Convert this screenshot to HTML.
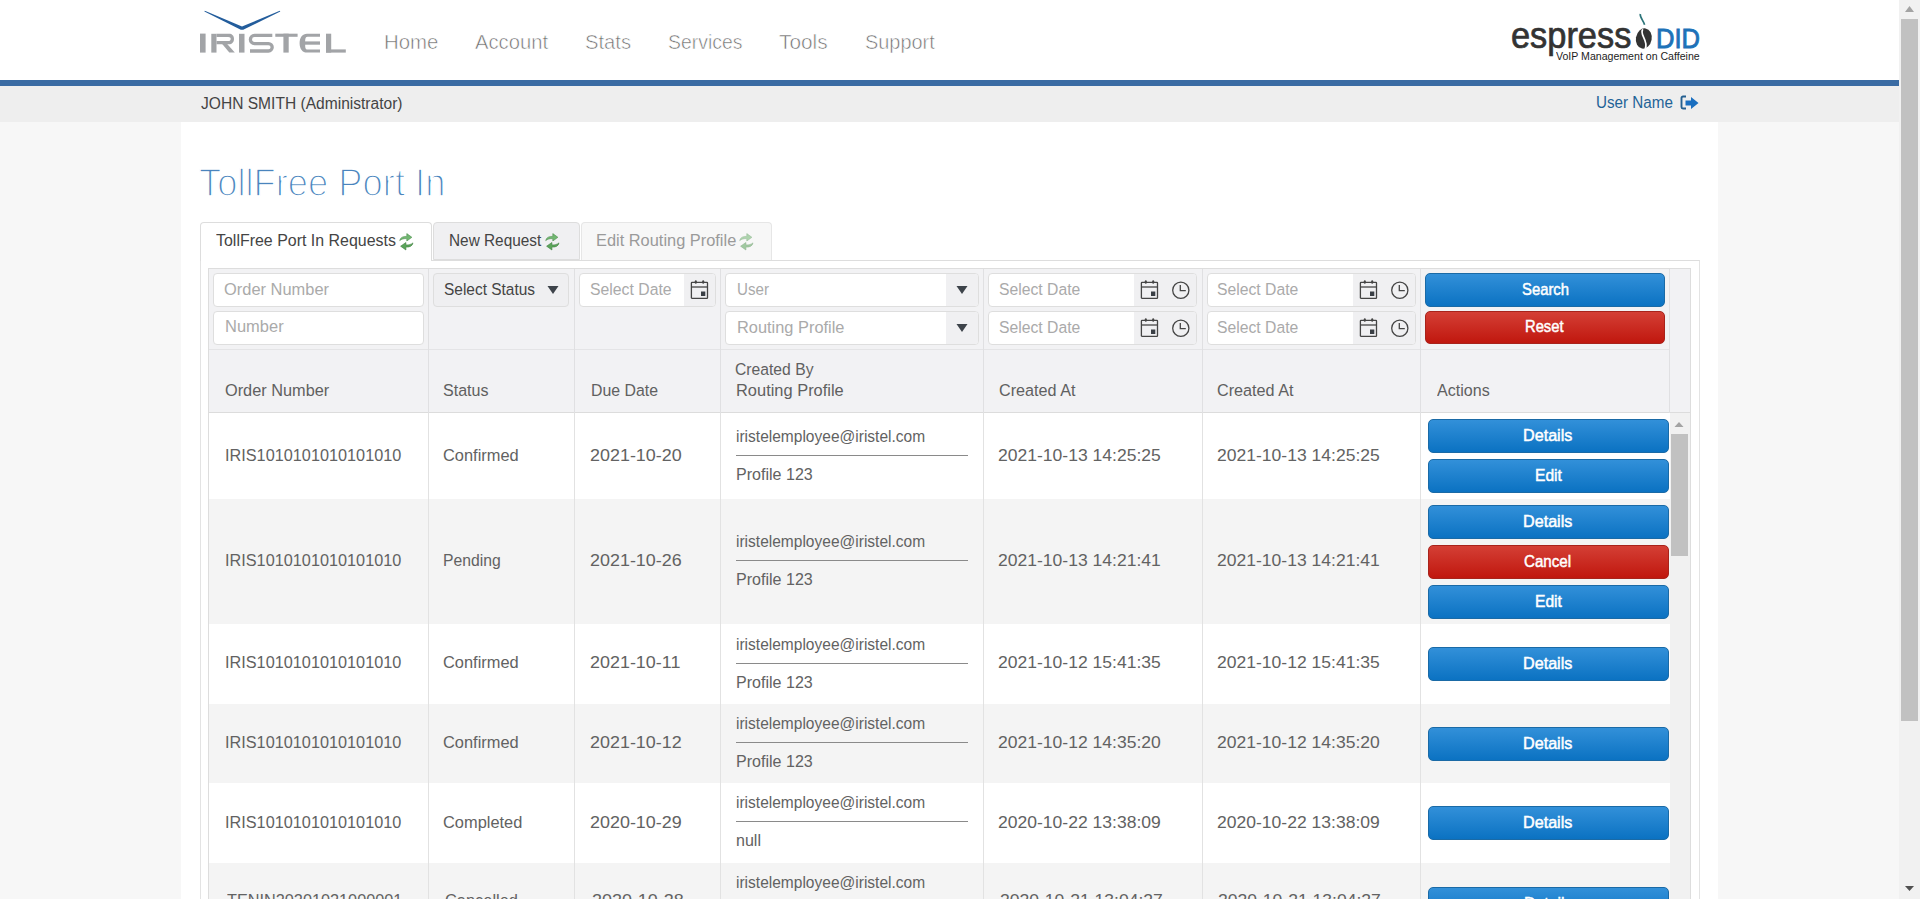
<!DOCTYPE html>
<html><head><meta charset="utf-8"><title>TollFree Port In</title>
<style>
html,body{margin:0;padding:0;}
body{width:1920px;height:899px;overflow:hidden;position:relative;background:#f7f7f7;font-family:"Liberation Sans",sans-serif;}
div,svg{position:absolute;}
.t{position:absolute;white-space:nowrap;transform-origin:0 0;display:block;}
</style></head><body>
<div style="left:0px;top:0px;width:1899px;height:80px;background:#fff"></div>
<div style="left:0px;top:80px;width:1899px;height:6px;background:#3a6ba3"></div>
<div style="left:0px;top:86px;width:1899px;height:36px;background:#eeeeee"></div>
<div style="left:0px;top:122px;width:1899px;height:777px;background:#f7f7f7"></div>
<div style="left:181px;top:122px;width:1537px;height:777px;background:#fff"></div>
<svg style="position:absolute;left:195px;top:5px" width="160" height="55" viewBox="195 5 160 55">
<path d="M204.8,10.7 L242,26.5 L279.8,10.7 L280.3,11.6 L243.2,29.8 L240.8,29.8 L204.4,11.6 Z" fill="#235d9c"/>
<g fill="#a2a4a7">
<rect x="200" y="33.6" width="5.6" height="19"/>
<rect x="211.3" y="33.8" width="5.2" height="18.8"/>
<path d="M211.3,33.8 H229 C232,33.8 234,35.8 234,38.9 C234,42 232,44.2 229,44.2 H216.5 V41 H228.3 C229.8,41 230.7,40.1 230.7,38.9 C230.7,37.7 229.8,37 228.3,37 H216.5 V33.8 Z"/>
<path d="M222.2,44 H227.2 L234.8,52.6 H229.3 Z"/>
<rect x="239" y="33.8" width="5.5" height="18.8"/>
<path d="M272.3,35.4 H254.5 A4.1,4.1 0 0 0 254.5,43.6 H268.5 A3.7,3.7 0 0 1 268.5,51 H250" fill="none" stroke="#a2a4a7" stroke-width="3.3"/>
<rect x="275.3" y="33.7" width="22.3" height="3.1"/>
<rect x="283.4" y="33.7" width="5.3" height="18.9"/>
<path d="M320,33.7 H307 C302.5,33.7 299.6,37.5 299.6,43.2 C299.6,48.8 302.5,52.6 307,52.6 H320 V49.5 H307.5 C305,49.5 305.2,46.5 305.2,43.2 C305.2,39.8 305,36.8 307.5,36.8 H320 Z"/>
<rect x="305" y="41.4" width="15" height="3.3"/>
<rect x="326" y="33.7" width="5.2" height="18.9"/>
<rect x="326" y="49.4" width="19.8" height="3.2"/>
</g></svg>
<span class="t" style="left:383.60px;top:31.00px;font-size:21px;line-height:21px;color:#707070;transform:scaleX(0.9712);-webkit-text-stroke:0.6px #fff;">Home</span>
<span class="t" style="left:474.64px;top:31.00px;font-size:21px;line-height:21px;color:#707070;transform:scaleX(0.9619);-webkit-text-stroke:0.6px #fff;">Account</span>
<span class="t" style="left:584.73px;top:31.00px;font-size:21px;line-height:21px;color:#707070;transform:scaleX(0.9635);-webkit-text-stroke:0.6px #fff;">Stats</span>
<span class="t" style="left:667.69px;top:31.00px;font-size:21px;line-height:21px;color:#707070;transform:scaleX(0.9236);-webkit-text-stroke:0.6px #fff;">Services</span>
<span class="t" style="left:778.84px;top:31.00px;font-size:21px;line-height:21px;color:#707070;transform:scaleX(0.9899);-webkit-text-stroke:0.6px #fff;">Tools</span>
<span class="t" style="left:864.64px;top:31.00px;font-size:21px;line-height:21px;color:#707070;transform:scaleX(0.9480);-webkit-text-stroke:0.6px #fff;">Support</span>
<span class="t" style="left:1511.00px;top:18.00px;font-size:36px;line-height:36px;color:#333;transform:scaleX(0.9548);-webkit-text-stroke:0.7px #333;">espress</span>
<svg style="position:absolute;left:1630px;top:8px" width="30" height="44" viewBox="1630 8 30 44">
<path d="M1640.3,14 C1639.6,17.5 1643.5,20.5 1644.6,24.8" stroke="#2a7378" stroke-width="1.7" fill="none"/>
<ellipse cx="1643.8" cy="38.5" rx="7.9" ry="10.2" fill="#333" transform="rotate(10 1643.8 38.5)"/>
<path d="M1642.8,29.2 C1638.8,34.5 1648.8,40 1645.3,48.8" stroke="#fff" stroke-width="1.7" fill="none"/>
</svg>
<span class="t" style="left:1656.00px;top:25.00px;font-size:28px;line-height:28px;color:#1d72b8;transform:scaleX(0.9119);-webkit-text-stroke:0.9px #1d72b8;">DID</span>
<span class="t" style="left:1556.00px;top:52.00px;font-size:10px;line-height:10px;color:#1c1c1c;transform:scaleX(1.0576);">VoIP Management on Caffeine</span>
<span class="t" style="left:201.45px;top:96.00px;font-size:16px;line-height:16px;color:#444;transform:scaleX(0.9731);">JOHN SMITH (Administrator)</span>
<span class="t" style="left:1595.79px;top:95.00px;font-size:16px;line-height:16px;color:#1f6397;transform:scaleX(0.9500);">User Name</span>
<svg style="position:absolute;left:1680px;top:95px" width="20" height="16" viewBox="0 0 20 16">
<path d="M6,1.5 H3 a1.5,1.5 0 0 0 -1.5,1.5 V12 a1.5,1.5 0 0 0 1.5,1.5 H6" stroke="#245f90" stroke-width="1.9" fill="none"/>
<path d="M5.5,5.5 H11 V2 L18.5,8 L11,14 V10.5 H5.5 Z" fill="#1a6fc0"/>
</svg>
<div style="left:1899px;top:0px;width:21px;height:899px;background:#f1f1f1"></div>
<div style="left:1901px;top:19px;width:17px;height:702px;background:#c1c1c1"></div>
<svg style="position:absolute;left:1899px;top:0" width="21" height="17"><path d="M6,12 L10.5,6 L15,12 Z" fill="#a3a3a3"/></svg>
<svg style="position:absolute;left:1899px;top:882px" width="21" height="17"><path d="M6,4 L15,4 L10.5,9 Z" fill="#505050"/></svg>
<span class="t" style="left:198.89px;top:163.00px;font-size:39px;line-height:39px;color:#4a84bd;transform:scaleX(0.9318);-webkit-text-stroke:1.6px #fff;">TollFree Port In</span>
<div style="left:200px;top:260px;width:1500px;height:639px;border-left:1px solid #e3e3e3;border-right:1px solid #e3e3e3;border-top:1px solid #ddd;box-sizing:border-box;background:#fff"></div>
<div style="left:200px;top:222px;width:232px;height:39px;background:#fff;border:1px solid #ddd;border-bottom:none;border-radius:4px 4px 0 0;box-sizing:border-box"></div>
<div style="left:433px;top:222px;width:147px;height:38px;background:#f0f0f2;border:1px solid #ddd;border-radius:4px 4px 0 0;box-sizing:border-box"></div>
<div style="left:581px;top:222px;width:191px;height:38px;background:#f7f7f7;border:1px solid #e6e6e6;border-bottom:none;border-radius:4px 4px 0 0;box-sizing:border-box"></div>
<span class="t" style="left:216.00px;top:231.70px;font-size:15px;line-height:15px;color:#444;transform:scale(1.0635,1.100);">TollFree Port In Requests</span>
<span class="t" style="left:449.25px;top:231.70px;font-size:15px;line-height:15px;color:#444;transform:scale(1.0244,1.100);">New Request</span>
<span class="t" style="left:595.99px;top:231.70px;font-size:15px;line-height:15px;color:#9a9a9a;transform:scale(1.0923,1.100);">Edit Routing Profile</span>
<svg style="position:absolute;left:397px;top:233px;opacity:1.0" width="17" height="18" viewBox="0 0 17 18">
<path d="M2.7,7.6 C3.3,4.3 6.3,3.2 9.8,3.4 V0.6 L14.9,4.3 L9.8,8 V5.6 C6.9,5.4 4.6,6.1 2.7,7.6 Z" fill="#72b872" stroke="#4e8f4e" stroke-width="0.6"/>
<path d="M16,9.9 C15.4,13.2 12.4,14.3 8.9,14.1 V17 L3.6,13.2 L8.9,9.5 V11.9 C11.8,12.1 14.1,11.4 16,9.9 Z" fill="#5aa55a" stroke="#3f7f3f" stroke-width="0.6"/>
</svg>
<svg style="position:absolute;left:543px;top:233px;opacity:1.0" width="17" height="18" viewBox="0 0 17 18">
<path d="M2.7,7.6 C3.3,4.3 6.3,3.2 9.8,3.4 V0.6 L14.9,4.3 L9.8,8 V5.6 C6.9,5.4 4.6,6.1 2.7,7.6 Z" fill="#72b872" stroke="#4e8f4e" stroke-width="0.6"/>
<path d="M16,9.9 C15.4,13.2 12.4,14.3 8.9,14.1 V17 L3.6,13.2 L8.9,9.5 V11.9 C11.8,12.1 14.1,11.4 16,9.9 Z" fill="#5aa55a" stroke="#3f7f3f" stroke-width="0.6"/>
</svg>
<svg style="position:absolute;left:736.5px;top:233px;opacity:0.55" width="17" height="18" viewBox="0 0 17 18">
<path d="M2.7,7.6 C3.3,4.3 6.3,3.2 9.8,3.4 V0.6 L14.9,4.3 L9.8,8 V5.6 C6.9,5.4 4.6,6.1 2.7,7.6 Z" fill="#72b872" stroke="#4e8f4e" stroke-width="0.6"/>
<path d="M16,9.9 C15.4,13.2 12.4,14.3 8.9,14.1 V17 L3.6,13.2 L8.9,9.5 V11.9 C11.8,12.1 14.1,11.4 16,9.9 Z" fill="#5aa55a" stroke="#3f7f3f" stroke-width="0.6"/>
</svg>
<div style="left:208px;top:268px;width:1483px;height:631px;background:#f2f2f4;border:1px solid #ddd;box-sizing:border-box;border-bottom:none"></div>
<div style="left:209px;top:349px;width:1460px;height:1px;background:#e4e4e6"></div>
<div style="left:209px;top:412px;width:1481px;height:1px;background:#dcdcdc"></div>
<div style="left:428px;top:269px;width:1px;height:144px;background:#e0e0e2"></div>
<div style="left:574px;top:269px;width:1px;height:144px;background:#e0e0e2"></div>
<div style="left:720px;top:269px;width:1px;height:144px;background:#e0e0e2"></div>
<div style="left:983px;top:269px;width:1px;height:144px;background:#e0e0e2"></div>
<div style="left:1202px;top:269px;width:1px;height:144px;background:#e0e0e2"></div>
<div style="left:1420px;top:269px;width:1px;height:144px;background:#e0e0e2"></div>
<div style="left:1669px;top:269px;width:1px;height:144px;background:#e0e0e2"></div>
<div style="left:209px;top:413px;width:1461px;height:86px;background:#fff"></div>
<div style="left:209px;top:499px;width:1461px;height:125px;background:#f4f4f4"></div>
<div style="left:209px;top:624px;width:1461px;height:80px;background:#fff"></div>
<div style="left:209px;top:704px;width:1461px;height:79px;background:#f4f4f4"></div>
<div style="left:209px;top:783px;width:1461px;height:80px;background:#fff"></div>
<div style="left:209px;top:863px;width:1461px;height:97px;background:#f4f4f4"></div>
<div style="left:428px;top:413px;width:1px;height:486px;background:#e2e2e2"></div>
<div style="left:574px;top:413px;width:1px;height:486px;background:#e2e2e2"></div>
<div style="left:720px;top:413px;width:1px;height:486px;background:#e2e2e2"></div>
<div style="left:983px;top:413px;width:1px;height:486px;background:#e2e2e2"></div>
<div style="left:1202px;top:413px;width:1px;height:486px;background:#e2e2e2"></div>
<div style="left:1420px;top:413px;width:1px;height:486px;background:#e2e2e2"></div>
<div style="left:1670px;top:413px;width:20px;height:486px;background:#f1f1f1"></div>
<div style="left:1671px;top:434px;width:17px;height:122px;background:#c1c1c1"></div>
<svg style="position:absolute;left:1670px;top:418px" width="18" height="12"><path d="M4.5,9 L9,4 L13.5,9 Z" fill="#a3a3a3"/></svg>
<div style="left:213px;top:273px;width:211px;height:34px;background:#fff;border:1px solid #dedede;border-radius:4px;box-sizing:border-box"></div>
<div style="left:213px;top:311px;width:211px;height:34px;background:#fff;border:1px solid #dedede;border-radius:4px;box-sizing:border-box"></div>
<div style="left:433px;top:273px;width:136px;height:34px;background:#efeff1;border:1px solid #dedede;border-radius:4px;box-sizing:border-box"></div>
<span class="t" style="left:443.84px;top:280.70px;font-size:15px;line-height:15px;color:#444;transform:scale(1.0299,1.100);">Select Status</span>
<svg style="position:absolute;left:547px;top:285px" width="12" height="10"><path d="M0.5,1 L11.5,1 L6,9 Z" fill="#3d434a"/></svg>
<span class="t" style="left:224.15px;top:280.70px;font-size:15px;line-height:15px;color:#aaa;transform:scale(1.0958,1.100);">Order Number</span>
<span class="t" style="left:224.64px;top:317.70px;font-size:15px;line-height:15px;color:#aaa;transform:scale(1.0987,1.100);">Number</span>
<div style="left:579px;top:273px;width:137px;height:34px;background:#fff;border:1px solid #dedede;border-radius:4px;box-sizing:border-box"></div>
<div style="left:684px;top:274px;width:31px;height:32px;background:#f0f0f2;border-radius:0 3px 3px 0"></div>
<svg style="position:absolute;left:690px;top:280px" width="19" height="20" viewBox="0 0 19 20">
<rect x="1.4" y="2.3" width="16.1" height="16" fill="none" stroke="#454545" stroke-width="1.3" rx="0.6"/>
<line x1="1.4" y1="7" x2="17.5" y2="7" stroke="#454545" stroke-width="1.3"/>
<rect x="4.8" y="0.2" width="2" height="3.6" fill="#454545" rx="1"/><rect x="12.2" y="0.2" width="2" height="3.6" fill="#454545" rx="1"/>
<rect x="11" y="11.5" width="4.3" height="4.5" fill="#3a3f45"/>
</svg>
<span class="t" style="left:589.89px;top:280.70px;font-size:15px;line-height:15px;color:#aaa;transform:scale(1.0521,1.100);">Select Date</span>
<div style="left:725px;top:273px;width:254px;height:34px;background:#fff;border:1px solid #dedede;border-radius:4px;box-sizing:border-box"></div>
<div style="left:946px;top:274px;width:32px;height:32px;background:#f0f0f2;border-radius:0 3px 3px 0"></div>
<svg style="position:absolute;left:956px;top:285px" width="12" height="10"><path d="M0.5,1 L11.5,1 L6,9 Z" fill="#3d434a"/></svg>
<span class="t" style="left:736.73px;top:280.70px;font-size:15px;line-height:15px;color:#aaa;transform:scale(1.0104,1.100);">User</span>
<div style="left:725px;top:311px;width:254px;height:34px;background:#fff;border:1px solid #dedede;border-radius:4px;box-sizing:border-box"></div>
<div style="left:946px;top:312px;width:32px;height:32px;background:#f0f0f2;border-radius:0 3px 3px 0"></div>
<svg style="position:absolute;left:956px;top:323px" width="12" height="10"><path d="M0.5,1 L11.5,1 L6,9 Z" fill="#3d434a"/></svg>
<span class="t" style="left:736.74px;top:318.70px;font-size:15px;line-height:15px;color:#aaa;transform:scale(1.0921,1.100);">Routing Profile</span>
<div style="left:988px;top:273px;width:209px;height:34px;background:#fff;border:1px solid #dedede;border-radius:4px;box-sizing:border-box"></div>
<div style="left:1134px;top:274px;width:62px;height:32px;background:#f0f0f2;border-radius:0 3px 3px 0"></div>
<svg style="position:absolute;left:1140px;top:280px" width="19" height="20" viewBox="0 0 19 20">
<rect x="1.4" y="2.3" width="16.1" height="16" fill="none" stroke="#454545" stroke-width="1.3" rx="0.6"/>
<line x1="1.4" y1="7" x2="17.5" y2="7" stroke="#454545" stroke-width="1.3"/>
<rect x="4.8" y="0.2" width="2" height="3.6" fill="#454545" rx="1"/><rect x="12.2" y="0.2" width="2" height="3.6" fill="#454545" rx="1"/>
<rect x="11" y="11.5" width="4.3" height="4.5" fill="#3a3f45"/>
</svg>
<svg style="position:absolute;left:1172px;top:281px" width="19" height="19" viewBox="0 0 19 19">
<circle cx="8.8" cy="9.2" r="8.1" fill="none" stroke="#454545" stroke-width="1.3"/>
<path d="M8.3,4 V9.7 H13.8" fill="none" stroke="#454545" stroke-width="1.3"/>
</svg>
<span class="t" style="left:998.84px;top:280.70px;font-size:15px;line-height:15px;color:#aaa;transform:scale(1.0489,1.100);">Select Date</span>
<div style="left:988px;top:311px;width:209px;height:34px;background:#fff;border:1px solid #dedede;border-radius:4px;box-sizing:border-box"></div>
<div style="left:1134px;top:312px;width:62px;height:32px;background:#f0f0f2;border-radius:0 3px 3px 0"></div>
<svg style="position:absolute;left:1140px;top:318px" width="19" height="20" viewBox="0 0 19 20">
<rect x="1.4" y="2.3" width="16.1" height="16" fill="none" stroke="#454545" stroke-width="1.3" rx="0.6"/>
<line x1="1.4" y1="7" x2="17.5" y2="7" stroke="#454545" stroke-width="1.3"/>
<rect x="4.8" y="0.2" width="2" height="3.6" fill="#454545" rx="1"/><rect x="12.2" y="0.2" width="2" height="3.6" fill="#454545" rx="1"/>
<rect x="11" y="11.5" width="4.3" height="4.5" fill="#3a3f45"/>
</svg>
<svg style="position:absolute;left:1172px;top:319px" width="19" height="19" viewBox="0 0 19 19">
<circle cx="8.8" cy="9.2" r="8.1" fill="none" stroke="#454545" stroke-width="1.3"/>
<path d="M8.3,4 V9.7 H13.8" fill="none" stroke="#454545" stroke-width="1.3"/>
</svg>
<span class="t" style="left:998.84px;top:318.70px;font-size:15px;line-height:15px;color:#aaa;transform:scale(1.0489,1.100);">Select Date</span>
<div style="left:1207px;top:273px;width:209px;height:34px;background:#fff;border:1px solid #dedede;border-radius:4px;box-sizing:border-box"></div>
<div style="left:1353px;top:274px;width:62px;height:32px;background:#f0f0f2;border-radius:0 3px 3px 0"></div>
<svg style="position:absolute;left:1359px;top:280px" width="19" height="20" viewBox="0 0 19 20">
<rect x="1.4" y="2.3" width="16.1" height="16" fill="none" stroke="#454545" stroke-width="1.3" rx="0.6"/>
<line x1="1.4" y1="7" x2="17.5" y2="7" stroke="#454545" stroke-width="1.3"/>
<rect x="4.8" y="0.2" width="2" height="3.6" fill="#454545" rx="1"/><rect x="12.2" y="0.2" width="2" height="3.6" fill="#454545" rx="1"/>
<rect x="11" y="11.5" width="4.3" height="4.5" fill="#3a3f45"/>
</svg>
<svg style="position:absolute;left:1391px;top:281px" width="19" height="19" viewBox="0 0 19 19">
<circle cx="8.8" cy="9.2" r="8.1" fill="none" stroke="#454545" stroke-width="1.3"/>
<path d="M8.3,4 V9.7 H13.8" fill="none" stroke="#454545" stroke-width="1.3"/>
</svg>
<span class="t" style="left:1216.99px;top:280.70px;font-size:15px;line-height:15px;color:#aaa;transform:scale(1.0489,1.100);">Select Date</span>
<div style="left:1207px;top:311px;width:209px;height:34px;background:#fff;border:1px solid #dedede;border-radius:4px;box-sizing:border-box"></div>
<div style="left:1353px;top:312px;width:62px;height:32px;background:#f0f0f2;border-radius:0 3px 3px 0"></div>
<svg style="position:absolute;left:1359px;top:318px" width="19" height="20" viewBox="0 0 19 20">
<rect x="1.4" y="2.3" width="16.1" height="16" fill="none" stroke="#454545" stroke-width="1.3" rx="0.6"/>
<line x1="1.4" y1="7" x2="17.5" y2="7" stroke="#454545" stroke-width="1.3"/>
<rect x="4.8" y="0.2" width="2" height="3.6" fill="#454545" rx="1"/><rect x="12.2" y="0.2" width="2" height="3.6" fill="#454545" rx="1"/>
<rect x="11" y="11.5" width="4.3" height="4.5" fill="#3a3f45"/>
</svg>
<svg style="position:absolute;left:1391px;top:319px" width="19" height="19" viewBox="0 0 19 19">
<circle cx="8.8" cy="9.2" r="8.1" fill="none" stroke="#454545" stroke-width="1.3"/>
<path d="M8.3,4 V9.7 H13.8" fill="none" stroke="#454545" stroke-width="1.3"/>
</svg>
<span class="t" style="left:1216.99px;top:318.70px;font-size:15px;line-height:15px;color:#aaa;transform:scale(1.0489,1.100);">Select Date</span>
<div style="left:1425px;top:273px;width:240px;height:33.5px;background:linear-gradient(#3290d9,#0b72c2);border:1px solid #1a6aa6;border-radius:5px;box-sizing:border-box"></div>
<span class="t" style="left:1521.69px;top:280.70px;font-size:15px;line-height:15px;color:#fff;transform:scale(0.9892,1.100);-webkit-text-stroke:0.45px #fff;">Search</span>
<div style="left:1425px;top:311px;width:240px;height:33px;background:linear-gradient(#d43f35,#c0170e);border:1px solid #a8231b;border-radius:5px;box-sizing:border-box"></div>
<span class="t" style="left:1524.88px;top:317.70px;font-size:15px;line-height:15px;color:#fff;transform:scale(0.9830,1.100);-webkit-text-stroke:0.45px #fff;">Reset</span>
<span class="t" style="left:224.60px;top:381.70px;font-size:15px;line-height:15px;color:#606060;transform:scale(1.0875,1.100);">Order Number</span>
<span class="t" style="left:443.25px;top:381.70px;font-size:15px;line-height:15px;color:#606060;transform:scale(1.0700,1.100);">Status</span>
<span class="t" style="left:590.69px;top:381.70px;font-size:15px;line-height:15px;color:#606060;transform:scale(1.0568,1.100);">Due Date</span>
<span class="t" style="left:735.42px;top:360.70px;font-size:15px;line-height:15px;color:#606060;transform:scale(1.0458,1.100);">Created By</span>
<span class="t" style="left:735.89px;top:381.70px;font-size:15px;line-height:15px;color:#606060;transform:scale(1.0950,1.100);">Routing Profile</span>
<span class="t" style="left:998.74px;top:381.70px;font-size:15px;line-height:15px;color:#606060;transform:scale(1.0781,1.100);">Created At</span>
<span class="t" style="left:1217.20px;top:381.70px;font-size:15px;line-height:15px;color:#606060;transform:scale(1.0788,1.100);">Created At</span>
<span class="t" style="left:1437.00px;top:381.70px;font-size:15px;line-height:15px;color:#606060;transform:scale(1.0714,1.100);">Actions</span>
<span class="t" style="left:225.25px;top:446.70px;font-size:15px;line-height:15px;color:#626262;transform:scale(1.0840,1.100);">IRIS1010101010101010</span>
<span class="t" style="left:443.35px;top:446.70px;font-size:15px;line-height:15px;color:#626262;transform:scale(1.0940,1.100);">Confirmed</span>
<span class="t" style="left:590.30px;top:446.70px;font-size:15px;line-height:15px;color:#626262;transform:scale(1.1950,1.100);">2021-10-20</span>
<span class="t" style="left:998.40px;top:446.70px;font-size:15px;line-height:15px;color:#626262;transform:scale(1.1690,1.100);">2021-10-13 14:25:25</span>
<span class="t" style="left:1217.20px;top:446.70px;font-size:15px;line-height:15px;color:#626262;transform:scale(1.1690,1.100);">2021-10-13 14:25:25</span>
<span class="t" style="left:735.99px;top:427.70px;font-size:15px;line-height:15px;color:#626262;transform:scale(1.0348,1.100);">iristelemployee@iristel.com</span>
<div style="left:736px;top:455px;width:232px;height:1px;background:#8a8a8a"></div>
<span class="t" style="left:736.00px;top:465.70px;font-size:15px;line-height:15px;color:#626262;transform:scale(1.0700,1.100);">Profile 123</span>
<div style="left:1428px;top:419px;width:241px;height:33.5px;background:linear-gradient(#3290d9,#0b72c2);border:1px solid #1a6aa6;border-radius:5px;box-sizing:border-box"></div>
<span class="t" style="left:1523.47px;top:426.70px;font-size:15px;line-height:15px;color:#fff;transform:scale(1.0770,1.100);-webkit-text-stroke:0.45px #fff;">Details</span>
<div style="left:1428px;top:459px;width:241px;height:33.5px;background:linear-gradient(#3290d9,#0b72c2);border:1px solid #1a6aa6;border-radius:5px;box-sizing:border-box"></div>
<span class="t" style="left:1534.65px;top:466.70px;font-size:15px;line-height:15px;color:#fff;transform:scale(1.0417,1.100);-webkit-text-stroke:0.45px #fff;">Edit</span>
<span class="t" style="left:225.25px;top:551.70px;font-size:15px;line-height:15px;color:#626262;transform:scale(1.0840,1.100);">IRIS1010101010101010</span>
<span class="t" style="left:443.35px;top:551.70px;font-size:15px;line-height:15px;color:#626262;transform:scale(1.0490,1.100);">Pending</span>
<span class="t" style="left:590.30px;top:551.70px;font-size:15px;line-height:15px;color:#626262;transform:scale(1.1950,1.100);">2021-10-26</span>
<span class="t" style="left:998.40px;top:551.70px;font-size:15px;line-height:15px;color:#626262;transform:scale(1.1690,1.100);">2021-10-13 14:21:41</span>
<span class="t" style="left:1217.20px;top:551.70px;font-size:15px;line-height:15px;color:#626262;transform:scale(1.1690,1.100);">2021-10-13 14:21:41</span>
<span class="t" style="left:735.99px;top:532.70px;font-size:15px;line-height:15px;color:#626262;transform:scale(1.0348,1.100);">iristelemployee@iristel.com</span>
<div style="left:736px;top:560px;width:232px;height:1px;background:#8a8a8a"></div>
<span class="t" style="left:736.00px;top:570.70px;font-size:15px;line-height:15px;color:#626262;transform:scale(1.0700,1.100);">Profile 123</span>
<div style="left:1428px;top:505px;width:241px;height:33.5px;background:linear-gradient(#3290d9,#0b72c2);border:1px solid #1a6aa6;border-radius:5px;box-sizing:border-box"></div>
<span class="t" style="left:1523.47px;top:512.70px;font-size:15px;line-height:15px;color:#fff;transform:scale(1.0770,1.100);-webkit-text-stroke:0.45px #fff;">Details</span>
<div style="left:1428px;top:545px;width:241px;height:33.5px;background:linear-gradient(#d43f35,#c0170e);border:1px solid #a8231b;border-radius:5px;box-sizing:border-box"></div>
<span class="t" style="left:1524.20px;top:552.70px;font-size:15px;line-height:15px;color:#fff;transform:scale(1.0095,1.100);-webkit-text-stroke:0.45px #fff;">Cancel</span>
<div style="left:1428px;top:585px;width:241px;height:33.5px;background:linear-gradient(#3290d9,#0b72c2);border:1px solid #1a6aa6;border-radius:5px;box-sizing:border-box"></div>
<span class="t" style="left:1534.65px;top:592.70px;font-size:15px;line-height:15px;color:#fff;transform:scale(1.0417,1.100);-webkit-text-stroke:0.45px #fff;">Edit</span>
<span class="t" style="left:225.25px;top:653.70px;font-size:15px;line-height:15px;color:#626262;transform:scale(1.0840,1.100);">IRIS1010101010101010</span>
<span class="t" style="left:443.35px;top:653.70px;font-size:15px;line-height:15px;color:#626262;transform:scale(1.0940,1.100);">Confirmed</span>
<span class="t" style="left:590.30px;top:653.70px;font-size:15px;line-height:15px;color:#626262;transform:scale(1.1950,1.100);">2021-10-11</span>
<span class="t" style="left:998.40px;top:653.70px;font-size:15px;line-height:15px;color:#626262;transform:scale(1.1690,1.100);">2021-10-12 15:41:35</span>
<span class="t" style="left:1217.20px;top:653.70px;font-size:15px;line-height:15px;color:#626262;transform:scale(1.1690,1.100);">2021-10-12 15:41:35</span>
<span class="t" style="left:735.99px;top:635.70px;font-size:15px;line-height:15px;color:#626262;transform:scale(1.0348,1.100);">iristelemployee@iristel.com</span>
<div style="left:736px;top:663px;width:232px;height:1px;background:#8a8a8a"></div>
<span class="t" style="left:736.00px;top:673.70px;font-size:15px;line-height:15px;color:#626262;transform:scale(1.0700,1.100);">Profile 123</span>
<div style="left:1428px;top:647px;width:241px;height:33.5px;background:linear-gradient(#3290d9,#0b72c2);border:1px solid #1a6aa6;border-radius:5px;box-sizing:border-box"></div>
<span class="t" style="left:1523.47px;top:654.70px;font-size:15px;line-height:15px;color:#fff;transform:scale(1.0770,1.100);-webkit-text-stroke:0.45px #fff;">Details</span>
<span class="t" style="left:225.25px;top:733.70px;font-size:15px;line-height:15px;color:#626262;transform:scale(1.0840,1.100);">IRIS1010101010101010</span>
<span class="t" style="left:443.35px;top:733.70px;font-size:15px;line-height:15px;color:#626262;transform:scale(1.0940,1.100);">Confirmed</span>
<span class="t" style="left:590.30px;top:733.70px;font-size:15px;line-height:15px;color:#626262;transform:scale(1.1950,1.100);">2021-10-12</span>
<span class="t" style="left:998.40px;top:733.70px;font-size:15px;line-height:15px;color:#626262;transform:scale(1.1690,1.100);">2021-10-12 14:35:20</span>
<span class="t" style="left:1217.20px;top:733.70px;font-size:15px;line-height:15px;color:#626262;transform:scale(1.1690,1.100);">2021-10-12 14:35:20</span>
<span class="t" style="left:735.99px;top:714.70px;font-size:15px;line-height:15px;color:#626262;transform:scale(1.0348,1.100);">iristelemployee@iristel.com</span>
<div style="left:736px;top:742px;width:232px;height:1px;background:#8a8a8a"></div>
<span class="t" style="left:736.00px;top:752.70px;font-size:15px;line-height:15px;color:#626262;transform:scale(1.0700,1.100);">Profile 123</span>
<div style="left:1428px;top:727px;width:241px;height:33.5px;background:linear-gradient(#3290d9,#0b72c2);border:1px solid #1a6aa6;border-radius:5px;box-sizing:border-box"></div>
<span class="t" style="left:1523.47px;top:734.70px;font-size:15px;line-height:15px;color:#fff;transform:scale(1.0770,1.100);-webkit-text-stroke:0.45px #fff;">Details</span>
<span class="t" style="left:225.25px;top:813.70px;font-size:15px;line-height:15px;color:#626262;transform:scale(1.0840,1.100);">IRIS1010101010101010</span>
<span class="t" style="left:443.35px;top:813.70px;font-size:15px;line-height:15px;color:#626262;transform:scale(1.0940,1.100);">Completed</span>
<span class="t" style="left:590.30px;top:813.70px;font-size:15px;line-height:15px;color:#626262;transform:scale(1.1950,1.100);">2020-10-29</span>
<span class="t" style="left:998.40px;top:813.70px;font-size:15px;line-height:15px;color:#626262;transform:scale(1.1690,1.100);">2020-10-22 13:38:09</span>
<span class="t" style="left:1217.20px;top:813.70px;font-size:15px;line-height:15px;color:#626262;transform:scale(1.1690,1.100);">2020-10-22 13:38:09</span>
<span class="t" style="left:735.99px;top:793.70px;font-size:15px;line-height:15px;color:#626262;transform:scale(1.0348,1.100);">iristelemployee@iristel.com</span>
<div style="left:736px;top:821px;width:232px;height:1px;background:#8a8a8a"></div>
<span class="t" style="left:736.00px;top:831.70px;font-size:15px;line-height:15px;color:#626262;transform:scale(1.0700,1.100);">null</span>
<div style="left:1428px;top:806px;width:241px;height:33.5px;background:linear-gradient(#3290d9,#0b72c2);border:1px solid #1a6aa6;border-radius:5px;box-sizing:border-box"></div>
<span class="t" style="left:1523.47px;top:813.70px;font-size:15px;line-height:15px;color:#fff;transform:scale(1.0770,1.100);-webkit-text-stroke:0.45px #fff;">Details</span>
<span class="t" style="left:226.50px;top:891.70px;font-size:15px;line-height:15px;color:#626262;transform:scale(1.0840,1.100);">TENIN20201021000001</span>
<span class="t" style="left:444.70px;top:891.70px;font-size:15px;line-height:15px;color:#626262;transform:scale(1.0940,1.100);">Cancelled</span>
<span class="t" style="left:591.60px;top:891.70px;font-size:15px;line-height:15px;color:#626262;transform:scale(1.1950,1.100);">2020-10-28</span>
<span class="t" style="left:999.80px;top:891.70px;font-size:15px;line-height:15px;color:#626262;transform:scale(1.1690,1.100);">2020-10-21 13:04:27</span>
<span class="t" style="left:1218.40px;top:891.70px;font-size:15px;line-height:15px;color:#626262;transform:scale(1.1690,1.100);">2020-10-21 13:04:27</span>
<span class="t" style="left:735.99px;top:873.70px;font-size:15px;line-height:15px;color:#626262;transform:scale(1.0348,1.100);">iristelemployee@iristel.com</span>
<div style="left:736px;top:901px;width:232px;height:1px;background:#8a8a8a"></div>
<span class="t" style="left:737.00px;top:911.70px;font-size:15px;line-height:15px;color:#626262;transform:scale(1.0700,1.100);">Profile 123</span>
<div style="left:1428px;top:887px;width:241px;height:33.5px;background:linear-gradient(#3290d9,#0b72c2);border:1px solid #1a6aa6;border-radius:5px;box-sizing:border-box"></div>
<span class="t" style="left:1524.00px;top:894.70px;font-size:15px;line-height:15px;color:#fff;transform:scale(1.0550,1.100);-webkit-text-stroke:0.45px #fff;">Details</span>
</body></html>
